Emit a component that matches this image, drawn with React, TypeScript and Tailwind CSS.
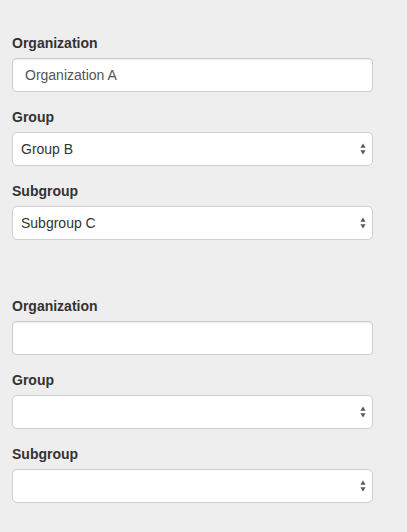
import React from "react";

const font = { fontFamily: '"Liberation Sans", Arial, sans-serif' };

function Arrows() {
  return (
    <svg width="6" height="12" viewBox="0 0 6 12" className="absolute right-[6px] top-1/2 -translate-y-1/2">
      <path d="M3 0.5 L5.6 4.8 L0.4 4.8 Z" fill="#5a5a5a" />
      <path d="M3 11.5 L5.6 7.2 L0.4 7.2 Z" fill="#5a5a5a" />
    </svg>
  );
}

function Label({ children }: { children: React.ReactNode }) {
  return <div className="h-5 mb-[5px] text-[14px] leading-5 font-bold text-[#333]">{children}</div>;
}

function TextInput({ value }: { value: string }) {
  return (
    <div className="h-[34px] w-[361px] rounded-[4px] border border-[#cccccc] bg-white px-3 text-[14px] leading-[32px] text-[#555] shadow-[inset_0_1px_1px_rgba(0,0,0,0.075)]">
      {value}
    </div>
  );
}

function SelectBox({ value }: { value: string }) {
  return (
    <div className="relative h-[34px] w-[361px] rounded-[5px] border border-[#cfcfcf] bg-white pl-2 text-[14px] leading-[32px] text-[#333]">
      {value}
      <Arrows />
    </div>
  );
}

function Section({ org, group, sub }: { org: string; group: string; sub: string }) {
  return (
    <div className="flex flex-col gap-[15px]">
      <div>
        <Label>Organization</Label>
        <TextInput value={org} />
      </div>
      <div>
        <Label>Group</Label>
        <SelectBox value={group} />
      </div>
      <div>
        <Label>Subgroup</Label>
        <SelectBox value={sub} />
      </div>
    </div>
  );
}

export default function App() {
  return (
    <div className="min-h-[532px] w-[407px] bg-[#eeeeee] pl-3 pt-[33px]" style={font}>
      <Section org="Organization A" group="Group B" sub="Subgroup C" />
      <div className="h-[56px]" />
      <Section org="" group="" sub="" />
    </div>
  );
}
